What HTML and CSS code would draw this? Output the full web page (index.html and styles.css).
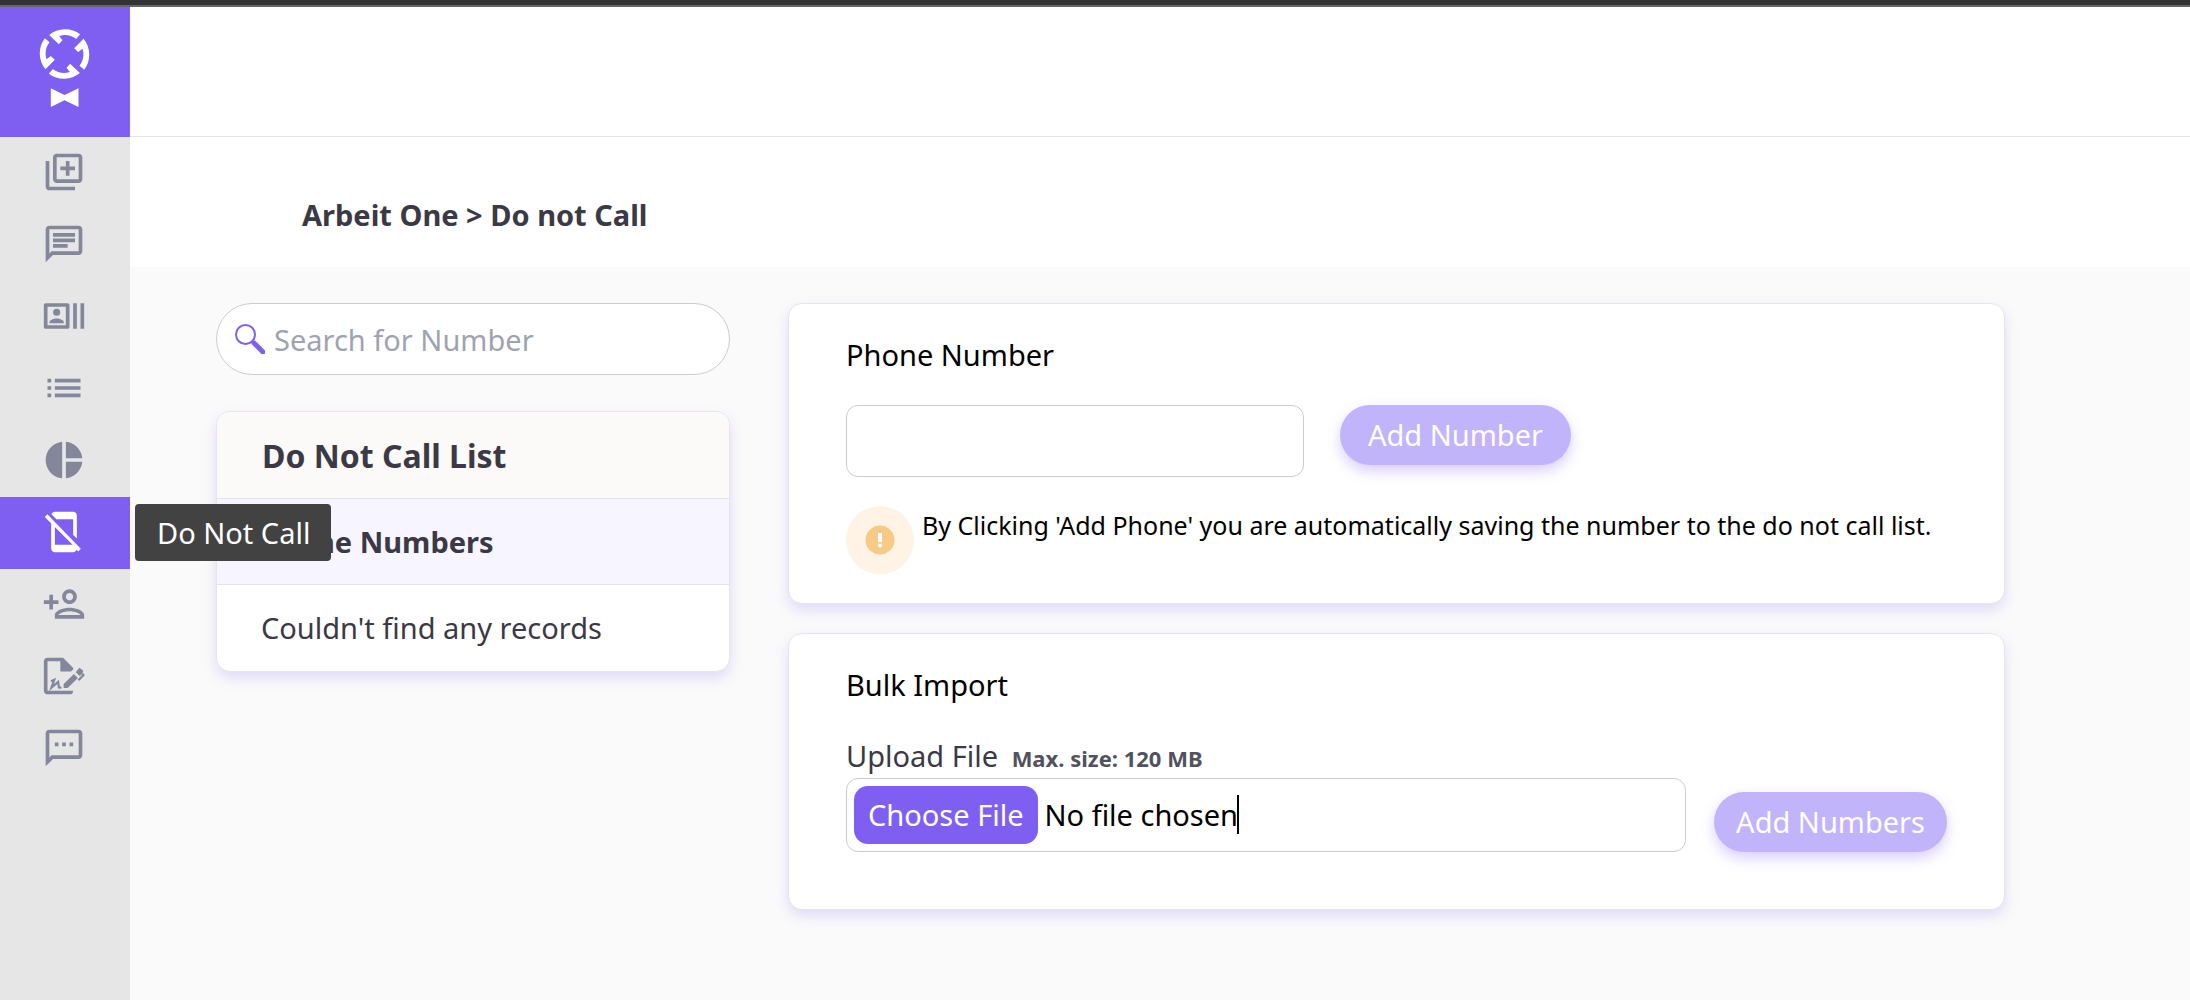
FILE: index.html
```html
<!DOCTYPE html>
<html lang="en">
<head>
<meta charset="UTF-8">
<title>Arbeit One - Do not Call</title>
<link rel="stylesheet" href="styles.css">
</head>
<body>

<div class="top-strip"></div>
<div class="app">
  <nav class="sidebar">
    <a href="#" class="logo" aria-label="Home">
      <svg viewBox="116 84 158 240" width="53" height="80">
        <g id="logoRing">
          <path d="M149 105A75 75 0 0 1 242 103L230 117A57 57 0 0 0 179 108L189 121L178 133Z"/>
          <path transform="rotate(90 195 162)" d="M149 105A75 75 0 0 1 242 103L230 117A57 57 0 0 0 179 108L189 121L178 133Z"/>
          <path transform="rotate(180 195 162)" d="M149 105A75 75 0 0 1 242 103L230 117A57 57 0 0 0 179 108L189 121L178 133Z"/>
          <path transform="rotate(270 195 162)" d="M149 105A75 75 0 0 1 242 103L230 117A57 57 0 0 0 179 108L189 121L178 133Z"/>
        </g>
        <path d="M154 265L195 285L237 265V321L195 301L154 321Z"/>
      </svg>
    </a>
    <a href="#" class="nav-item" aria-label="New campaign">
      <svg viewBox="0 0 24 24"><path d="M4 6H2v14c0 1.1.9 2 2 2h14v-2H4V6zm16-4H8c-1.1 0-2 .9-2 2v12c0 1.1.9 2 2 2h12c1.1 0 2-.9 2-2V4c0-1.1-.9-2-2-2zm0 14H8V4h12v12zm-7-2h2v-3h3V9h-3V6h-2v3h-3v2h3z"/></svg>
    </a>
    <a href="#" class="nav-item" aria-label="Chat">
      <svg viewBox="0 0 24 24"><path d="M4 4h16v12H5.17L4 17.17V4m0-2c-1.1 0-1.99.9-1.99 2L2 22l4-4h14c1.1 0 2-.9 2-2V4c0-1.1-.9-2-2-2H4zm2 10h8v2H6v-2zm0-3h12v2H6V9zm0-3h12v2H6V6z"/></svg>
    </a>
    <a href="#" class="nav-item" aria-label="Contacts">
      <svg viewBox="0 0 24 24"><path d="M21 5h2v14h-2zm-4 0h2v14h-2zm-3 0H2c-.55 0-1 .45-1 1v12c0 .55.45 1 1 1h12c.55 0 1-.45 1-1V6c0-.55-.45-1-1-1zm-1 12H3V7h10v10z"/><circle cx="8" cy="9.94" r="1.95"/><path d="M11.89 15.35c0-1.3-2.59-1.95-3.89-1.95s-3.89.65-3.89 1.95V16h7.78v-.65z"/></svg>
    </a>
    <a href="#" class="nav-item" aria-label="Lists">
      <svg viewBox="0 0 24 24"><path d="M3 13h2v-2H3v2zm0 4h2v-2H3v2zm0-8h2V7H3v2zm4 4h14v-2H7v2zm0 4h14v-2H7v2zM7 7v2h14V7H7z"/></svg>
    </a>
    <a href="#" class="nav-item" aria-label="Reports">
      <svg viewBox="0 0 24 24"><path d="M11 2v20c-5.07-.5-9-4.79-9-10s3.93-9.5 9-10zm2.03 0v8.99H22c-.47-4.74-4.24-8.52-8.97-8.99zm0 11.01V22c4.74-.47 8.5-4.25 8.97-8.99h-8.97z"/></svg>
    </a>
    <a href="#" class="nav-item active" aria-describedby="navTooltip" aria-label="Do Not Call">
      <svg viewBox="0 0 24 24"><path d="M17 5v8.61l2 2V3c0-1.1-.9-2-2-2H7c-.85 0-1.58.54-1.87 1.3L7.83 5H17zM2.92 2.35L1.51 3.77 5 7.26V21c0 1.1.9 2 2 2h10c.85 0 1.58-.55 1.87-1.3l.9.9 1.41-1.41zM7 19V9.27L16.73 19z"/></svg>
      <span class="tooltip" id="navTooltip" role="tooltip">Do Not Call</span>
    </a>
    <a href="#" class="nav-item" aria-label="Add user">
      <svg viewBox="0 0 24 24"><path d="M15 12c2.21 0 4-1.79 4-4s-1.79-4-4-4-4 1.79-4 4 1.79 4 4 4zm0-6c1.1 0 2 .9 2 2s-.9 2-2 2-2-.9-2-2 .9-2 2-2zm0 8c-2.67 0-8 1.34-8 4v2h16v-2c0-2.66-5.33-4-8-4zm-6 4c.22-.72 3.31-2 6-2 2.7 0 5.8 1.29 6 2H9zm-3-3v-3h3v-2H6V7H4v3H1v2h3v3z"/></svg>
    </a>
    <a href="#" class="nav-item" aria-label="Contracts">
      <svg viewBox="0 0 24 24">
        <path d="M3 2H11.5L17 7.6V8.5L15.8 9.5H10V4H3V20H17C17 21 16.5 22 15.5 22H3C1.9 22 1 21.1 1 20V4C1 2.9 1.9 2 3 2Z"/>
        <path d="M11.8 18.6V16.4L17.4 10.9L19.6 13.1L14 18.6ZM18.4 9.9L20.4 7.5L22.4 9L22.2 10.6L20.6 12Z"/>
        <path d="M4.9 14.8L6.7 14L5.2 18.3L8.8 15.2L9.2 18.2L10.6 18.3M22.2 10.8L22.6 11.5L19.9 14.3" class="ink"/>
      </svg>
    </a>
    <a href="#" class="nav-item" aria-label="Messages">
      <svg viewBox="0 0 24 24"><path d="M20 2H4c-1.1 0-2 .9-2 2v18l4-4h14c1.1 0 2-.9 2-2V4c0-1.1-.9-2-2-2zm0 14H5.2L4 17.2V4h16v12zM7 9h2v2H7zm4 0h2v2h-2zm4 0h2v2h-2z"/></svg>
    </a>
  </nav>

  <div class="page">
    <header class="header"></header>
    <div class="title-bar">
      <h1>Arbeit One &gt; Do not Call</h1>
    </div>

    <main class="content">
      <section class="left-col">
        <label class="search">
          <svg viewBox="0 0 30 30" width="30" height="30"><circle cx="10.5" cy="10.5" r="9.5" fill="none" stroke="#7f5ff2" stroke-width="2"/><path d="M19 19L28 28" stroke="#7f5ff2" stroke-width="5" stroke-linecap="round"/></svg>
          <input type="search" placeholder="Search for Number" aria-label="Search for Number">
        </label>
        <table class="card dnc-table">
          <thead>
            <tr class="list-title"><th>Do Not Call List</th></tr>
            <tr class="list-head"><th>Phone Numbers</th></tr>
          </thead>
          <tbody>
            <tr><td>Couldn't find any records</td></tr>
          </tbody>
        </table>
      </section>

      <section class="right-col">
        <form class="card panel">
          <label class="panel-title" for="phoneNumber">Phone Number</label>
          <div class="phone-row">
            <input type="text" id="phoneNumber" class="text-input">
            <button type="button" class="button button-wide">Add Number</button>
          </div>
          <div class="info">
            <svg viewBox="0 0 68 68" width="68" height="68"><circle cx="34" cy="34" r="34" fill="#fef3e4"/><circle cx="34" cy="34" r="14.5" fill="#f7cb87"/><path d="M32 27h4v9h-4z" fill="#fff"/><circle cx="34" cy="39.5" r="2" fill="#fff"/></svg>
            <p>By Clicking 'Add Phone' you are automatically saving the number to the do not call list.</p>
          </div>
        </form>

        <form class="card panel">
          <h2 class="panel-title">Bulk Import</h2>
          <div class="file-row">
            <div class="file-field">
              <label for="bulkFile">Upload File <small>Max. size: 120 MB</small></label>
              <input type="file" id="bulkFile" class="file-input">
              <span class="caret"></span>
            </div>
            <button type="button" class="button">Add Numbers</button>
          </div>
        </form>
      </section>
    </main>
  </div>
</div>

</body>
</html>
```
FILE: styles.css
```css
* {
  box-sizing: border-box;
  margin: 0;
  padding: 0;
}

body {
  font-family: "Noto Sans", sans-serif;
  font-size: 29px;
  line-height: 40px;
  color: #3b3945;
  background-color: #fafafa;
}

input,
button {
  font-family: inherit;
  font-size: inherit;
  line-height: inherit;
}

.top-strip {
  height: 7px;
  background-color: #333;
  border-bottom: 2px solid #666;
}

.app {
  display: flex;
  min-height: calc(100vh - 7px);
}

/* sidebar */
.sidebar {
  flex: 0 0 130px;
  background-color: #e6e6e6;
}

.logo {
  display: flex;
  justify-content: center;
  height: 130px;
  padding: 21px 1px 0 0;
  background-color: #7f5ff2;
}

.logo svg {
  fill: #fff;
}

.nav-item {
  position: relative;
  display: flex;
  justify-content: center;
  align-items: center;
  height: 72px;
  padding: 0 2px 2px 0;
}

.nav-item svg {
  width: 44px;
  height: 44px;
  fill: #838799;
}

.nav-item .ink {
  fill: none;
  stroke: #838799;
  stroke-width: 1.2;
}

.nav-item.active {
  background-color: #7f5ff2;
}

.nav-item.active svg {
  fill: #fff;
}

.tooltip {
  position: absolute;
  left: 135px;
  top: 7px;
  z-index: 1;
  padding: 9px 21px 8px 22px;
  border-radius: 4px;
  background-color: #424242;
  color: #fff;
  white-space: nowrap;
}

/* page */
.page {
  flex: 1;
  min-width: 0;
}

.header {
  height: 130px;
  background-color: #fff;
  border-bottom: 1px solid #e5e5e5;
}

.title-bar {
  height: 130px;
  padding: 58px 172px 0;
  background-color: #fff;
}

.title-bar h1 {
  font-size: 29px;
  font-weight: 700;
}

.content {
  display: grid;
  grid-template-columns: 514fr 1217fr;
  gap: 58px;
  align-items: start;
  padding: 36px 185px 36px 86px;
}

.card {
  background-color: #fff;
  border: 1px solid #e5e5eb;
  border-radius: 14px;
  box-shadow: 0 6px 14px rgba(127, 95, 242, 0.2);
}

.search {
  display: flex;
  align-items: center;
  height: 72px;
  margin-bottom: 36px;
  padding: 0 18px;
  background-color: #fff;
  border: 1px solid #ccc;
  border-radius: 36px;
}

.search input {
  flex: 1;
  min-width: 0;
  margin-left: 9px;
  padding-top: 2px;
  border: none;
  outline: none;
  background: none;
}

.search input::placeholder {
  color: #9ea3b0;
}

.dnc-table {
  width: 100%;
  border-spacing: 0;
  overflow: hidden;
}

.dnc-table th,
.dnc-table td {
  height: 86px;
  padding: 0 44px;
  text-align: left;
}

.dnc-table th {
  font-weight: 700;
  border-bottom: 1px solid #e5e5e5;
}

.dnc-table .list-title th {
  height: 87px;
  padding: 2px 45px 0;
  font-size: 32px;
  background-color: #fbfaf8;
}

.dnc-table .list-head th {
  background-color: #f7f5ff;
}

/* right column */
.right-col {
  display: grid;
  gap: 29px;
}

.panel {
  padding: 31px 57px 29px;
}

.panel-title {
  display: block;
  font-size: 29px;
  font-weight: 400;
  color: #000;
}

.phone-row {
  display: flex;
  align-items: flex-start;
  gap: 36px;
  margin-top: 30px;
}

.text-input {
  width: 458px;
  height: 72px;
  padding: 0 18px;
  border: 1px solid #ccc;
  border-radius: 12px;
}

.button {
  height: 60px;
  padding: 0 22px;
  border: none;
  border-radius: 30px;
  background-color: #c2b4fa;
  color: #fff;
  white-space: nowrap;
  box-shadow: 0 6px 14px rgba(127, 95, 242, 0.3);
}

.button-wide {
  padding: 0 28px;
}

.info {
  display: flex;
  gap: 8px;
  margin-top: 29px;
  color: #000;
  font-size: 25px;
  line-height: 38px;
}

.info svg {
  flex: none;
}

.file-row {
  display: flex;
  align-items: flex-end;
  gap: 28px;
  margin: 31px 0 28px;
}

.file-field {
  position: relative;
  flex: 1;
}

.file-field label {
  display: block;
}

.file-field small {
  margin-left: 6px;
  font-size: 22px;
  font-weight: 700;
  color: #52525e;
}

.file-input {
  display: block;
  width: 100%;
  height: 74px;
  padding: 7px;
  border: 1px solid #ccc;
  border-radius: 12px;
  color: #000;
}

.file-input::file-selector-button {
  height: 58px;
  margin-right: 7px;
  padding: 0 14px;
  border: none;
  border-radius: 14px;
  background-color: #7f5ff2;
  color: #fff;
  font: inherit;
}

/* text cursor after the file name */
.caret {
  position: absolute;
  left: 391px;
  bottom: 18px;
  width: 2px;
  height: 39px;
  background-color: #000;
}
```
